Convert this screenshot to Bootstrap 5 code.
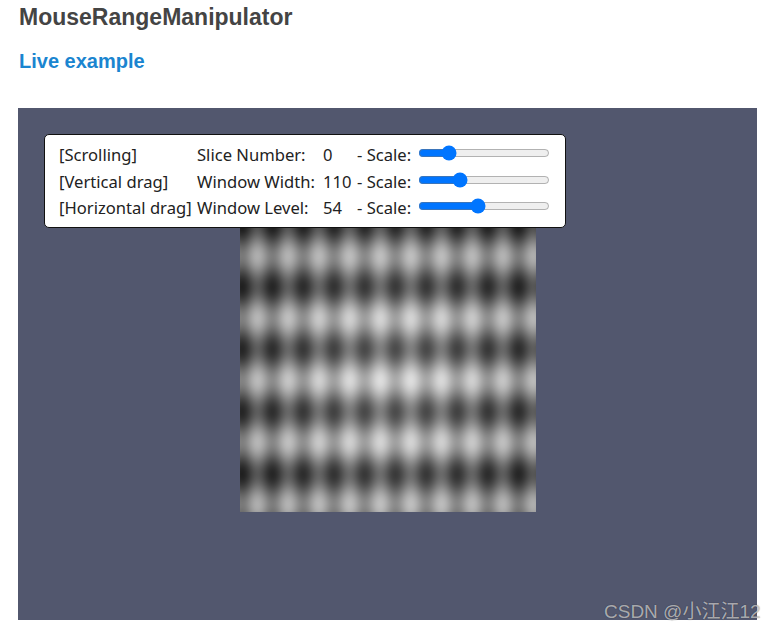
<!DOCTYPE html>
<html lang="en">
<head>
<meta charset="utf-8">
<title>MouseRangeManipulator</title>
<link href="https://cdn.jsdelivr.net/npm/bootstrap@5.3.0/dist/css/bootstrap.min.css" rel="stylesheet">
<style>
html,body{height:632px;overflow:hidden;background:#fff}
.doc-page{padding:0 18px;font-family:"Liberation Sans",Arial,sans-serif}
.doc-title{font-size:23px;font-weight:700;color:#444;line-height:26px;margin:4px 0 0 1px}
.doc-link{display:block;font-size:20px;font-weight:700;color:#1a85d0;text-decoration:none;line-height:26px;margin:18px 0 0 1px}
.vtk-view{position:relative;width:739px;height:512px;margin-top:34px;background:#52576e}
.vtk-canvas{width:296px;height:296px;display:block}
.vtk-panel{position:absolute;left:26px;top:26px;width:522px;height:94px;background:#fff;border:1px solid #111;border-radius:5px;padding:7px 0 0 14px;font-family:"Noto Sans",sans-serif;font-size:16.6px;color:#222;line-height:26.5px}
.vtk-grid{display:grid;grid-template-columns:138px 126px 34px 61px auto}
.vtk-grid span{white-space:nowrap}
.vtk-grid input{margin:0;width:132px;height:16px;display:block;align-self:center;transform:translateY(-2px)}
.mark-csdn{position:absolute;left:604px;top:600px;font-family:"Liberation Sans","Noto Sans CJK SC",sans-serif;font-size:19px;line-height:24px;color:rgba(255,255,255,.62);text-shadow:0 0 1px rgba(0,0,0,.6)}
</style>
</head>
<body>
<div class="doc-page">
  <h1 class="doc-title">MouseRangeManipulator</h1>
  <a class="doc-link" href="#">Live example</a>
  <div class="vtk-view d-flex align-items-center justify-content-center">
    <canvas class="vtk-canvas" id="wave" width="296" height="296"></canvas>
    <div class="vtk-panel">
      <div class="vtk-grid">
        <span>[Scrolling]</span><span>Slice Number:</span><span>0</span><span>- Scale:</span><input type="range" min="0" max="100" value="20" aria-label="Slice scale">
        <span>[Vertical drag]</span><span>Window Width:</span><span>110</span><span>- Scale:</span><input type="range" min="0" max="100" value="29" aria-label="Width scale">
        <span>[Horizontal drag]</span><span>Window Level:</span><span>54</span><span>- Scale:</span><input type="range" min="0" max="100" value="45" aria-label="Level scale">
      </div>
    </div>
  </div>
</div>
<div class="mark-csdn">CSDN @小江江12</div>
<script>
var c=document.getElementById('wave'),g=c.getContext('2d'),im=g.createImageData(296,296);
for(var y=0;y<296;y++)for(var x=0;x<296;x++){
  var px=x+240,py=y+216,dx=px-395,dy=py-380;
  var r=Math.cos(2*Math.PI*dy/62.2),k=-Math.cos(2*Math.PI*dx/30.7);
  var d=Math.exp(-(dx*dx+dy*dy)/(2*100*100));
  var v=0.36+0.23*d+0.18*r+0.1*k;
  v=Math.max(0.1,Math.min(0.92,v))*255;
  var i=(y*296+x)*4;im.data[i]=im.data[i+1]=im.data[i+2]=v;im.data[i+3]=255;
}
g.putImageData(im,0,0);
</script>
<script src="https://cdn.jsdelivr.net/npm/bootstrap@5.3.0/dist/js/bootstrap.bundle.min.js"></script>
</body>
</html>
